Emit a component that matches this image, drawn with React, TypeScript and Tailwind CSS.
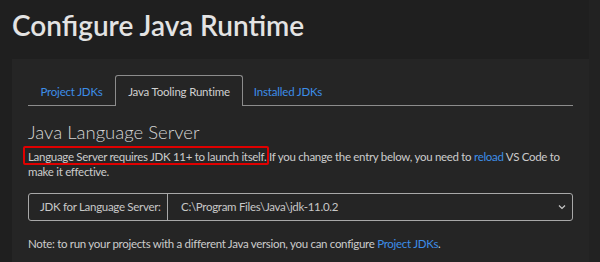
import React from "react";

export default function App() {
  const font = { fontFamily: 'Lato, "Noto Sans", sans-serif' };
  return (
    <div className="w-[600px] h-[262px] overflow-hidden bg-[#1f1f1f] text-[#cccccc] flex" style={font}>
      <div className="w-[589px]">
        <h1 className="h-[59px] pl-[12px] pt-[7px] text-[28px] leading-[36px] font-semibold text-[#e3e3e3]">
          Configure Java Runtime
        </h1>
        <div className="ml-[12px] h-[203px] bg-[#252525] px-[16px] pt-[17px]">
          <div className="flex items-end h-[30px] border-b border-[#8c8c8c] text-[11.5px] tracking-[-0.2px] whitespace-nowrap">
            <div className="w-[87px] h-full flex items-center justify-center pt-[2px] text-[#3d8ee8]">Project JDKs</div>
            <div className="relative w-[128px] h-[31px] mb-[-1px] flex items-center justify-center pt-[1px] border border-b-0 border-[#8c8c8c] rounded-t-[3px] bg-[#252525] text-[#d0d0d0]">
              Java Tooling Runtime
            </div>
            <div className="w-[90px] h-full flex items-center justify-center pt-[2px] text-[#3d8ee8]">Installed JDKs</div>
          </div>
          <div className="pt-[15px] text-[18.5px] leading-[22px] font-light text-[#d4d4d4]">Java Language Server</div>
          <div className="mt-[6px] text-[11.5px] leading-[15px] tracking-[-0.3px] text-[#cccccc]">
            <span className="relative">
              Language Server requires JDK 11+ to launch itself.
              <span className="absolute left-[-5px] right-[-3px] top-[-4px] bottom-[-2px] border-2 border-[#e00000] rounded-[2px]" />
            </span>{" "}
            If you change the entry below, you need to <span className="text-[#3d8ee8]">reload</span> VS Code to make it effective.
          </div>
          <div className="mt-[14px] flex h-[28px] border border-[#a8a8a8] rounded-[3px] text-[11.5px] tracking-[-0.3px] whitespace-nowrap">
            <div className="w-[139px] flex items-center pl-[11px] border-r border-[#a8a8a8] text-[#c8c8c8]">JDK for Language Server:</div>
            <div className="flex-1 flex items-center pl-[13px] pr-[5px] text-[#c8c8c8]">
              <span className="flex-1">C:\Program Files\Java\jdk-11.0.2</span>
              <svg width="10" height="10" viewBox="0 0 10 10" fill="none" stroke="#c8c8c8" strokeWidth="1.2">
                <path d="M2 3.5l3 3 3-3" />
              </svg>
            </div>
          </div>
          <div className="mt-[15px] text-[11.5px] leading-[15px] tracking-[-0.3px] text-[#cccccc]">
            Note: to run your projects with a different Java version, you can configure <span className="text-[#3d8ee8]">Project JDKs</span>.
          </div>
        </div>
      </div>
      <div className="flex-1 bg-[#222222]" />
    </div>
  );
}
